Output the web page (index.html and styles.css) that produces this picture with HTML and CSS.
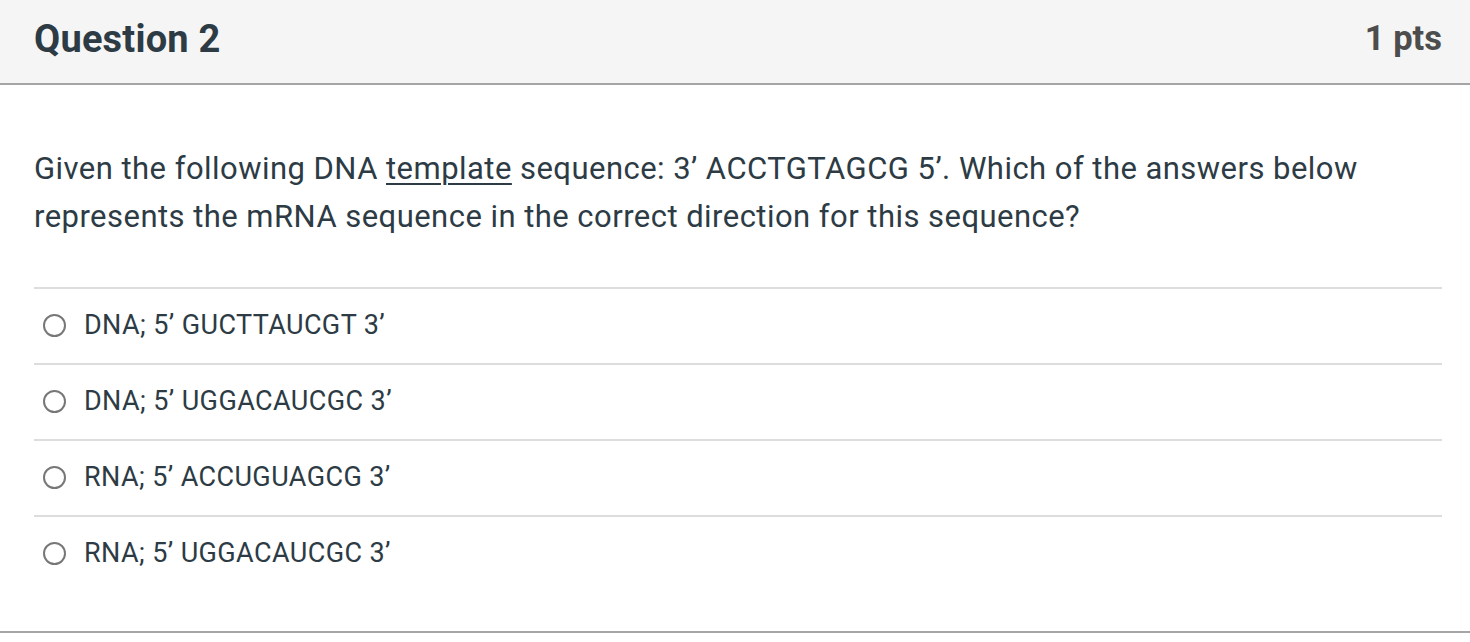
FILE: index.html
```html
<!DOCTYPE html>
<html>
<head>
<meta charset="utf-8">
<link rel="stylesheet" href="styles.css">
</head>
<body>
<div class="question">
  <div class="header">
    <h2 class="title">Question 2</h2>
    <div class="points">1 pts</div>
  </div>
  <div class="content">
    <p class="text">Given the following DNA <u>template</u> sequence: 3’ ACCTGTAGCG 5’. Which of the answers below represents the mRNA sequence in the correct direction for this sequence?</p>
    <div class="answers">
      <label class="answer"><span class="radio"></span><span class="label">DNA; 5’ GUCTTAUCGT 3’</span></label>
      <label class="answer"><span class="radio"></span><span class="label">DNA; 5’ UGGACAUCGC 3’</span></label>
      <label class="answer"><span class="radio"></span><span class="label">RNA; 5’ ACCUGUAGCG 3’</span></label>
      <label class="answer"><span class="radio"></span><span class="label">RNA; 5’ UGGACAUCGC 3’</span></label>
    </div>
  </div>
</div>
</body>
</html>
```

FILE: styles.css
```css
html, body {
  margin: 0;
  padding: 0;
  background: #ffffff;
}
body {
  font-family: Roboto, "Liberation Sans", sans-serif;
  color: #2d3b45;
}
.question {
  width: 1470px;
  border-bottom: 2px solid #a5a5a5;
}
.header {
  height: 83px;
  background: #f5f5f5;
  border-bottom: 2px solid #a5a5a5;
  display: flex;
  align-items: center;
  justify-content: space-between;
  padding: 0 28px 0 34px;
  box-sizing: content-box;
}
.title {
  margin: 0;
  font-size: 38px;
  font-weight: 700;
  color: #2d3b45;
  line-height: 1;
  letter-spacing: 0.2px;
  padding-bottom: 6px;
}
.points {
  font-size: 34.5px;
  font-weight: 700;
  color: #4d4d4d;
  line-height: 1;
  padding-bottom: 6px;
}
.content {
  padding: 0 28px 0 34px;
}
.text {
  margin: 0;
  padding-top: 60px;
  padding-bottom: 46px;
  font-size: 31px;
  line-height: 48px;
  letter-spacing: 0.46px;
  color: #2d3b45;
  width: 1380px;
}
.text u {
  text-decoration-thickness: 2px;
  text-underline-offset: 4px;
}
.answers {
  display: flex;
  flex-direction: column;
  padding-bottom: 40px;
}
.answer {
  display: flex;
  align-items: center;
  box-sizing: border-box;
  height: 76px;
  border-top: 2px solid #dddddd;
  padding-bottom: 2px;
}
.radio {
  width: 19px;
  height: 19px;
  border: 2px solid #777777;
  border-radius: 50%;
  margin-left: 9px;
  margin-right: 18px;
  flex: none;
}
.label {
  font-size: 27px;
  color: #2d3b45;
  letter-spacing: 0.4px;
}
```
